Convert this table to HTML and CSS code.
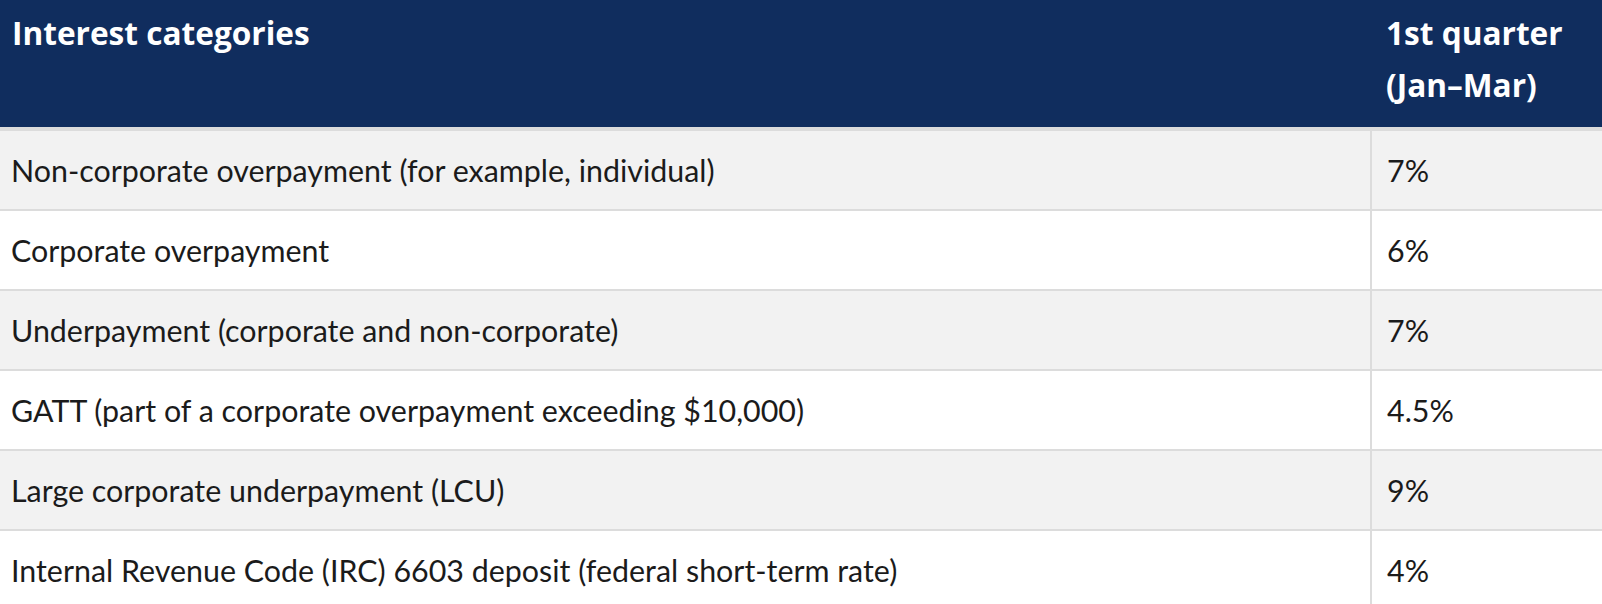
FILE: index.html
```html
<!DOCTYPE html>
<html lang="en">
<head>
<meta charset="utf-8">
<title>Interest rates</title>
<link rel="stylesheet" href="styles.css">
</head>
<body>
<table class="rates">
  <thead>
    <tr>
      <th class="cat">Interest categories</th>
      <th class="rate">1st quarter (Jan–Mar)</th>
    </tr>
  </thead>
  <tbody>
    <tr>
      <td class="cat">Non-corporate overpayment (for example, individual)</td>
      <td class="rate">7%</td>
    </tr>
    <tr>
      <td class="cat">Corporate overpayment</td>
      <td class="rate">6%</td>
    </tr>
    <tr>
      <td class="cat">Underpayment (corporate and non-corporate)</td>
      <td class="rate">7%</td>
    </tr>
    <tr>
      <td class="cat">GATT (part of a corporate overpayment exceeding $10,000)</td>
      <td class="rate">4.5%</td>
    </tr>
    <tr>
      <td class="cat">Large corporate underpayment (LCU)</td>
      <td class="rate">9%</td>
    </tr>
    <tr>
      <td class="cat">Internal Revenue Code (IRC) 6603 deposit (federal short-term rate)</td>
      <td class="rate">4%</td>
    </tr>
  </tbody>
</table>
</body>
</html>
```

FILE: styles.css
```css
html, body {
  margin: 0;
  padding: 0;
  background: #ffffff;
}

body {
  font-family: Lato, "Open Sans", sans-serif;
  color: #1b1b1b;
  overflow: hidden;
}

.rates {
  border-collapse: separate;
  border-spacing: 0;
  width: 1602px;
  table-layout: fixed;
}

.rates th,
.rates td {
  box-sizing: border-box;
  text-align: left;
}

.rates th {
  background: #102d5e;
  color: #ffffff;
  font-family: "Open Sans", Lato, sans-serif;
  font-weight: 700;
  font-size: 31.6px;
  line-height: 52px;
  vertical-align: top;
  padding: 7px 10px 16px 14px;
  border-bottom: 4px solid #dcdcdc;
}

.rates th.cat {
  width: 1372px;
  padding-left: 12px;
}

.rates td {
  font-size: 30.4px;
  line-height: 48px;
  padding: 15px 16px 15px 15px;
  border-bottom: 2px solid #dcdcdc;
  vertical-align: middle;
}

.rates td.cat {
  padding-left: 11px;
  border-right: 2px solid #dcdcdc;
}

.rates tbody tr:nth-child(odd) td {
  background: #f2f2f2;
}
```
